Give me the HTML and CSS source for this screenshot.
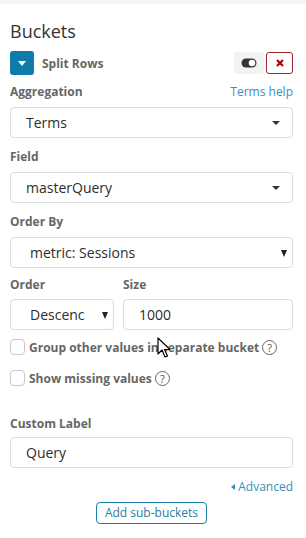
FILE: index.html
```html
<!DOCTYPE html>
<html lang="en">
<head>
    <meta charset="UTF-8">
    <meta name="viewport" content="width=device-width, initial-scale=1.0">
    <title>Buckets</title>
    <link rel="stylesheet" href="styles.css">
</head>
<body>

    <div class="buckets-panel">
        <h2>Buckets</h2>

        <div class="agg-header">
            <button class="collapse-btn">
                <svg width="8" height="5" viewBox="0 0 8 5"><path d="M0 0h8L4 5z" fill="#fff"/></svg>
            </button>
            <span class="agg-title">Split Rows</span>
            <button class="toggle-btn">
                <svg width="16" height="10" viewBox="0 0 16 10">
                    <rect x="0.5" y="0.5" width="15" height="9" rx="4.5" fill="#333"/>
                    <circle cx="11" cy="5" r="3.3" fill="#fff"/>
                </svg>
            </button>
            <button class="remove-btn">
                <svg width="8" height="8" viewBox="0 0 8 8"><path d="M1 1l6 6M7 1l-6 6" stroke="#b4000a" stroke-width="2.2"/></svg>
            </button>
        </div>

        <div class="form-group">
            <div class="label-row">
                <label>Aggregation</label>
                <a href="#" class="help-link">Terms help</a>
            </div>
            <div class="select">Terms<span class="caret"></span></div>
        </div>

        <div class="form-group">
            <label>Field</label>
            <div class="select">masterQuery<span class="caret"></span></div>
        </div>

        <div class="form-group">
            <label>Order By</label>
            <div class="select native">metric: Sessions<span class="caret"></span></div>
        </div>

        <div class="form-row">
            <div class="form-group order-col">
                <label>Order</label>
                <div class="select native">Descenc<span class="caret"></span></div>
            </div>
            <div class="form-group size-col">
                <label>Size</label>
                <div class="input">1000</div>
            </div>
        </div>

        <div class="check-row">
            <span class="checkbox"></span>
            <span class="check-label">Group other values in separate bucket</span>
            <span class="help-icon">?</span>
        </div>
        <div class="check-row last">
            <span class="checkbox"></span>
            <span class="check-label">Show missing values</span>
            <span class="help-icon">?</span>
        </div>

        <div class="form-group custom-label">
            <label>Custom Label</label>
            <div class="input">Query</div>
        </div>

        <div class="advanced-row">
            <a href="#" class="advanced-link"><span class="left-caret"></span>Advanced</a>
        </div>

        <div class="add-row">
            <button class="add-btn">Add sub-buckets</button>
        </div>

        <svg class="cursor" width="13" height="21" viewBox="0 0 13 21">
            <path d="M1 1v16l4-4 3 7 2.5-1-3-6.5h5.5z" fill="#fff" stroke="#000" stroke-width="1.2" stroke-linejoin="round"/>
        </svg>
    </div>

</body>
</html>
```

FILE: styles.css
```css
body {
    margin: 0;
    background-color: #f5f5f5;
    font-family: 'Open Sans', sans-serif;
    color: #333;
}

.buckets-panel {
    position: relative;
    margin-top: 4px;
    background-color: #fff;
    padding: 14px 13px 20px 10px;
    min-height: 500px;
}

h2 {
    margin: 0 0 7px;
    font-size: 18px;
    line-height: 26px;
    font-weight: 400;
    color: #333;
}

.agg-header {
    display: flex;
    align-items: center;
    height: 24px;
    margin-bottom: 9px;
}

.collapse-btn {
    width: 24px;
    height: 24px;
    border: none;
    border-radius: 3px;
    background-color: #0e7bab;
    display: flex;
    align-items: center;
    justify-content: center;
    padding: 0;
}

.agg-title {
    flex-grow: 1;
    margin-left: 8px;
    font-size: 12px;
    font-weight: 700;
    color: #666;
}

.toggle-btn {
    width: 30px;
    height: 22px;
    border: none;
    border-radius: 3px;
    background-color: #f3f3f3;
    display: flex;
    align-items: center;
    justify-content: center;
    padding: 0;
}

.remove-btn {
    width: 27px;
    height: 22px;
    margin-left: 2px;
    border: 1px solid #a0262e;
    border-radius: 3px;
    background-color: #fff;
    display: flex;
    align-items: center;
    justify-content: center;
    padding: 0;
}

.form-group {
    margin-bottom: 11px;
}

.form-group label {
    display: block;
    font-size: 12px;
    line-height: 16px;
    font-weight: 700;
    color: #666;
    margin-bottom: 7px;
}

.label-row {
    display: flex;
    justify-content: space-between;
    align-items: baseline;
}

.help-link {
    font-size: 12px;
    line-height: 16px;
    color: #3a8fb7;
    text-decoration: none;
}

.select,
.input {
    position: relative;
    box-sizing: border-box;
    height: 31px;
    border: 1px solid #dcdcdc;
    border-radius: 4px;
    padding: 0 15px;
    font-size: 14px;
    line-height: 29px;
    color: #2d2d2d;
    background-color: #fff;
}

.select .caret {
    position: absolute;
    right: 12px;
    top: 13px;
    border-left: 4px solid transparent;
    border-right: 4px solid transparent;
    border-top: 4px solid #333;
}

.select.native {
    padding-left: 19px;
}

.select.native .caret {
    right: 5px;
    top: 12px;
    border-left-width: 3.5px;
    border-right-width: 3.5px;
    border-top: 7px solid #222;
}

.form-row {
    display: flex;
    gap: 9px;
    margin-top: -2px;
}

.form-row label {
    margin-bottom: 6px;
}

.order-col {
    width: 104px;
    margin-bottom: 7px;
}

.order-col .select {
    overflow: hidden;
    white-space: nowrap;
}

.size-col {
    flex-grow: 1;
    margin-bottom: 7px;
}

.check-row {
    display: flex;
    align-items: center;
    height: 20px;
    margin-bottom: 11px;
}

.check-row.last {
    margin-bottom: 28px;
}

.checkbox {
    box-sizing: border-box;
    width: 15px;
    height: 16px;
    border: 1px solid #c8c8c8;
    border-radius: 4px;
    margin-right: 4px;
}

.check-label {
    font-size: 12px;
    font-weight: 700;
    color: #666;
}

.help-icon {
    box-sizing: border-box;
    width: 15px;
    height: 15px;
    margin-left: 3px;
    border: 1px solid #666;
    border-radius: 50%;
    font-size: 11px;
    line-height: 13px;
    text-align: center;
    color: #555;
}

.custom-label {
    margin-bottom: 8px;
}

.custom-label label {
    margin-bottom: 5px;
}

.advanced-row {
    text-align: right;
    line-height: 18px;
    margin-bottom: 4px;
}

.advanced-link {
    font-size: 12px;
    color: #3a8fb7;
    text-decoration: none;
}

.left-caret {
    display: inline-block;
    border-top: 3.5px solid transparent;
    border-bottom: 3.5px solid transparent;
    border-right: 4px solid #3a8fb7;
    margin-right: 3px;
    vertical-align: 1px;
}

.add-row {
    text-align: center;
}

.add-btn {
    height: 22px;
    padding: 0 8px;
    border: 1px solid #1a7fa8;
    border-radius: 4px;
    background-color: #fff;
    font-family: 'Open Sans', sans-serif;
    font-size: 12px;
    color: #2a7ea4;
}

.cursor {
    position: absolute;
    left: 157px;
    top: 333px;
}
```
